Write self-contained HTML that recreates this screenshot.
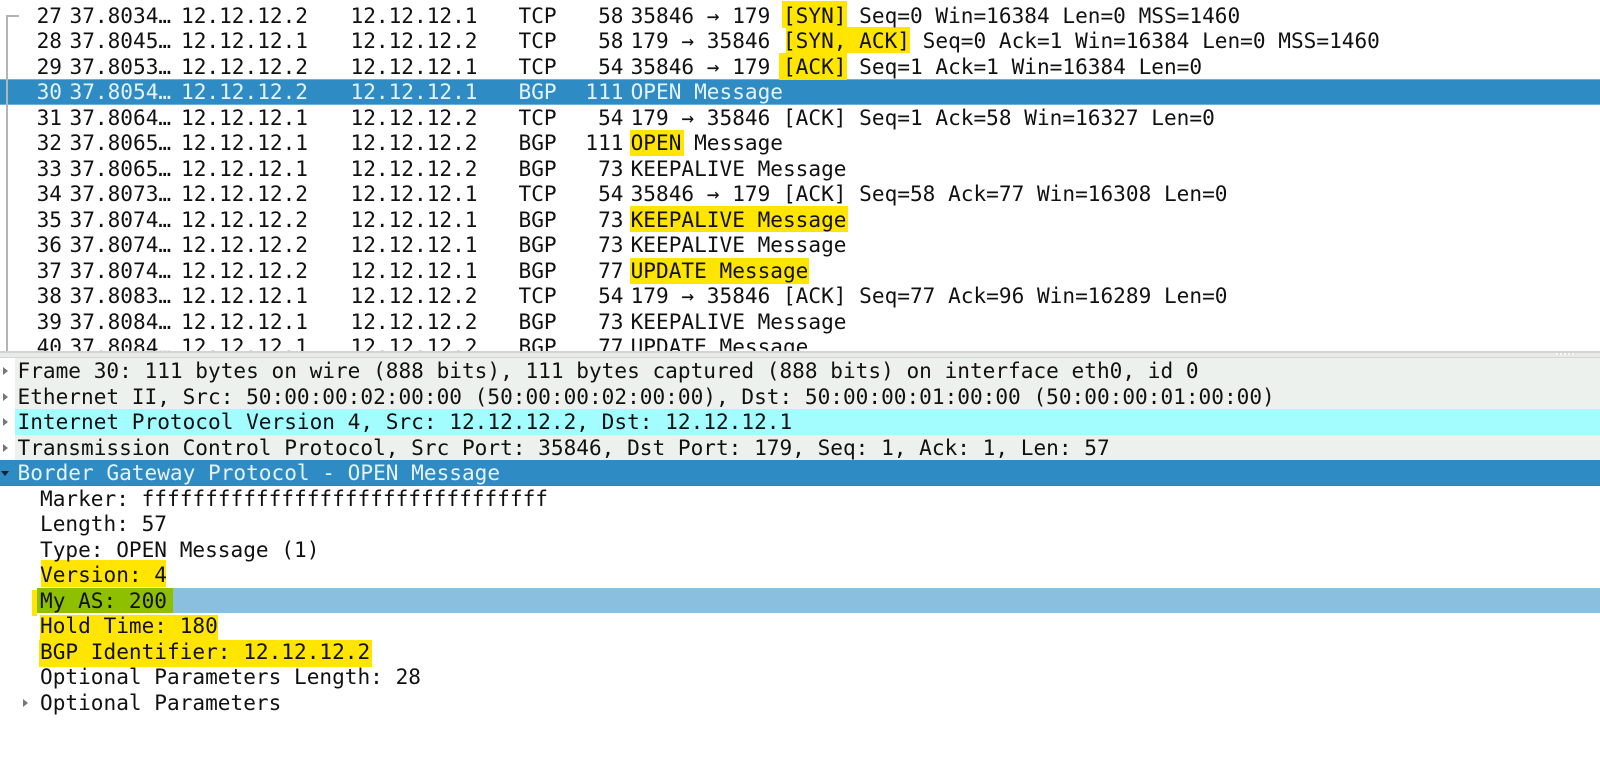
<!DOCTYPE html>
<html><head><meta charset="utf-8"><style>
html,body{margin:0;padding:0;background:#fff;width:1600px;height:778px;overflow:hidden}
body{position:relative;font:21.1px/26px "DejaVu Sans Mono","Liberation Mono",monospace;color:#111;filter:blur(.35px)}
div{position:absolute}
.t{white-space:pre;height:25.5px}
#list{left:0;top:0;width:1600px;height:351.5px;overflow:hidden}
.r{left:0;width:1600px;height:25.5px}
.r .t{top:0}
.n{left:0;width:62px;text-align:right}
.tm{left:69.5px}.s{left:181px}.d{left:350.5px}.p{left:518.5px}
.l{left:560px;width:63.5px;text-align:right}
.i{left:630.6px}
.sel{color:#e4f3fb}
.y{background:#ffe500}
.g{background:#edf1ee;left:15px;width:1585px;height:25.5px}
.a{width:0;height:0;border-left:5px solid #777;border-top:4px solid transparent;border-bottom:4px solid transparent}
.dt{left:17.5px}.fd{left:40px}
</style></head><body>
<div style="left:0;top:79.1px;width:1600px;height:25.5px;background:#2f8bc4;box-shadow:inset 0 1px 0 #6fb0d9,inset 0 -1px 0 #6fb0d9"></div>
<div class="y" style="left:782px;top:1px;width:65px;height:27px"></div>
<div class="y" style="left:786px;top:27px;width:124px;height:26px"></div>
<div class="y" style="left:779px;top:53px;width:68px;height:26.5px"></div>
<div class="y" style="left:630px;top:129.5px;width:54px;height:26px"></div>
<div class="y" style="left:630px;top:206px;width:218px;height:26px"></div>
<div class="y" style="left:630px;top:257.5px;width:179px;height:26px"></div>
<div style="left:6px;top:15px;width:13px;height:2px;background:#b4b4b4"></div>
<div style="left:5.5px;top:15px;width:2px;height:336px;background:#b4b4b4"></div>
<div id="list">
<div class="r" style="top:2.6px"><div class="t n">27</div><div class="t tm">37.8034…</div><div class="t s">12.12.12.2</div><div class="t d">12.12.12.1</div><div class="t p">TCP</div><div class="t l">58</div><div class="t i">35846 → 179 [SYN] Seq=0 Win=16384 Len=0 MSS=1460</div></div>
<div class="r" style="top:28.1px"><div class="t n">28</div><div class="t tm">37.8045…</div><div class="t s">12.12.12.1</div><div class="t d">12.12.12.2</div><div class="t p">TCP</div><div class="t l">58</div><div class="t i">179 → 35846 [SYN, ACK] Seq=0 Ack=1 Win=16384 Len=0 MSS=1460</div></div>
<div class="r" style="top:53.6px"><div class="t n">29</div><div class="t tm">37.8053…</div><div class="t s">12.12.12.2</div><div class="t d">12.12.12.1</div><div class="t p">TCP</div><div class="t l">54</div><div class="t i">35846 → 179 [ACK] Seq=1 Ack=1 Win=16384 Len=0</div></div>
<div class="r sel" style="top:79.1px"><div class="t n">30</div><div class="t tm">37.8054…</div><div class="t s">12.12.12.2</div><div class="t d">12.12.12.1</div><div class="t p">BGP</div><div class="t l">111</div><div class="t i">OPEN Message</div></div>
<div class="r" style="top:104.6px"><div class="t n">31</div><div class="t tm">37.8064…</div><div class="t s">12.12.12.1</div><div class="t d">12.12.12.2</div><div class="t p">TCP</div><div class="t l">54</div><div class="t i">179 → 35846 [ACK] Seq=1 Ack=58 Win=16327 Len=0</div></div>
<div class="r" style="top:130.1px"><div class="t n">32</div><div class="t tm">37.8065…</div><div class="t s">12.12.12.1</div><div class="t d">12.12.12.2</div><div class="t p">BGP</div><div class="t l">111</div><div class="t i">OPEN Message</div></div>
<div class="r" style="top:155.6px"><div class="t n">33</div><div class="t tm">37.8065…</div><div class="t s">12.12.12.1</div><div class="t d">12.12.12.2</div><div class="t p">BGP</div><div class="t l">73</div><div class="t i">KEEPALIVE Message</div></div>
<div class="r" style="top:181.1px"><div class="t n">34</div><div class="t tm">37.8073…</div><div class="t s">12.12.12.2</div><div class="t d">12.12.12.1</div><div class="t p">TCP</div><div class="t l">54</div><div class="t i">35846 → 179 [ACK] Seq=58 Ack=77 Win=16308 Len=0</div></div>
<div class="r" style="top:206.6px"><div class="t n">35</div><div class="t tm">37.8074…</div><div class="t s">12.12.12.2</div><div class="t d">12.12.12.1</div><div class="t p">BGP</div><div class="t l">73</div><div class="t i">KEEPALIVE Message</div></div>
<div class="r" style="top:232.1px"><div class="t n">36</div><div class="t tm">37.8074…</div><div class="t s">12.12.12.2</div><div class="t d">12.12.12.1</div><div class="t p">BGP</div><div class="t l">73</div><div class="t i">KEEPALIVE Message</div></div>
<div class="r" style="top:257.6px"><div class="t n">37</div><div class="t tm">37.8074…</div><div class="t s">12.12.12.2</div><div class="t d">12.12.12.1</div><div class="t p">BGP</div><div class="t l">77</div><div class="t i">UPDATE Message</div></div>
<div class="r" style="top:283.1px"><div class="t n">38</div><div class="t tm">37.8083…</div><div class="t s">12.12.12.1</div><div class="t d">12.12.12.2</div><div class="t p">TCP</div><div class="t l">54</div><div class="t i">179 → 35846 [ACK] Seq=77 Ack=96 Win=16289 Len=0</div></div>
<div class="r" style="top:308.6px"><div class="t n">39</div><div class="t tm">37.8084…</div><div class="t s">12.12.12.1</div><div class="t d">12.12.12.2</div><div class="t p">BGP</div><div class="t l">73</div><div class="t i">KEEPALIVE Message</div></div>
<div class="r" style="top:334.1px"><div class="t n">40</div><div class="t tm">37.8084…</div><div class="t s">12.12.12.1</div><div class="t d">12.12.12.2</div><div class="t p">BGP</div><div class="t l">77</div><div class="t i">UPDATE Message</div></div>
</div>
<div style="left:0;top:351px;width:1600px;height:7px;background:#e8ebe9;border-top:2px solid #d2d4d2;border-bottom:1px solid #d4d7d4;box-sizing:border-box"></div>
<div style="left:1556px;top:353px;width:19px;height:2px;background:repeating-linear-gradient(90deg,#fafafa 0 2px,#dcdfdc 2px 4px)"></div>

<div class="g" style="top:358.3px;height:51px"></div>
<div style="left:15px;top:409.3px;width:1585px;height:25.5px;background:#a3fdff"></div>
<div class="g" style="top:434.8px"></div>
<div style="left:0;top:460.3px;width:1600px;height:25.5px;background:#2f8bc4"></div>
<div class="y" style="left:41px;top:560px;width:125px;height:27px"></div>
<div style="left:37px;top:587.8px;width:1563px;height:25.5px;background:#8bbfdf"></div>
<div class="y" style="left:32px;top:590px;width:5px;height:26px"></div>
<div style="left:37px;top:587.8px;width:136px;height:25.5px;background:#8fc000"></div>
<div class="y" style="left:40px;top:615px;width:178px;height:25px"></div>
<div class="y" style="left:39px;top:640px;width:333px;height:27px"></div>

<div class="a" style="left:3px;top:367px"></div>
<div class="a" style="left:3px;top:392.5px"></div>
<div class="a" style="left:3px;top:418px"></div>
<div class="a" style="left:3px;top:443.5px"></div>
<div style="left:1px;top:471px;width:0;height:0;border-top:5px solid #123;border-left:4px solid transparent;border-right:4px solid transparent"></div>
<div class="a" style="left:23px;top:699px"></div>

<div class="t dt" style="top:358.3px">Frame 30: 111 bytes on wire (888 bits), 111 bytes captured (888 bits) on interface eth0, id 0</div>
<div class="t dt" style="top:383.8px">Ethernet II, Src: 50:00:00:02:00:00 (50:00:00:02:00:00), Dst: 50:00:00:01:00:00 (50:00:00:01:00:00)</div>
<div class="t dt" style="top:409.3px">Internet Protocol Version 4, Src: 12.12.12.2, Dst: 12.12.12.1</div>
<div class="t dt" style="top:434.8px">Transmission Control Protocol, Src Port: 35846, Dst Port: 179, Seq: 1, Ack: 1, Len: 57</div>
<div class="t dt" style="top:460.3px;color:#e4f3fb">Border Gateway Protocol - OPEN Message</div>
<div class="t fd" style="top:485.8px">Marker: ffffffffffffffffffffffffffffffff</div>
<div class="t fd" style="top:511.3px">Length: 57</div>
<div class="t fd" style="top:536.8px">Type: OPEN Message (1)</div>
<div class="t fd" style="top:562.3px">Version: 4</div>
<div class="t fd" style="top:587.8px">My AS: 200</div>
<div class="t fd" style="top:613.3px">Hold Time: 180</div>
<div class="t fd" style="top:638.8px">BGP Identifier: 12.12.12.2</div>
<div class="t fd" style="top:664.3px">Optional Parameters Length: 28</div>
<div class="t fd" style="top:689.8px">Optional Parameters</div>
</body></html>
